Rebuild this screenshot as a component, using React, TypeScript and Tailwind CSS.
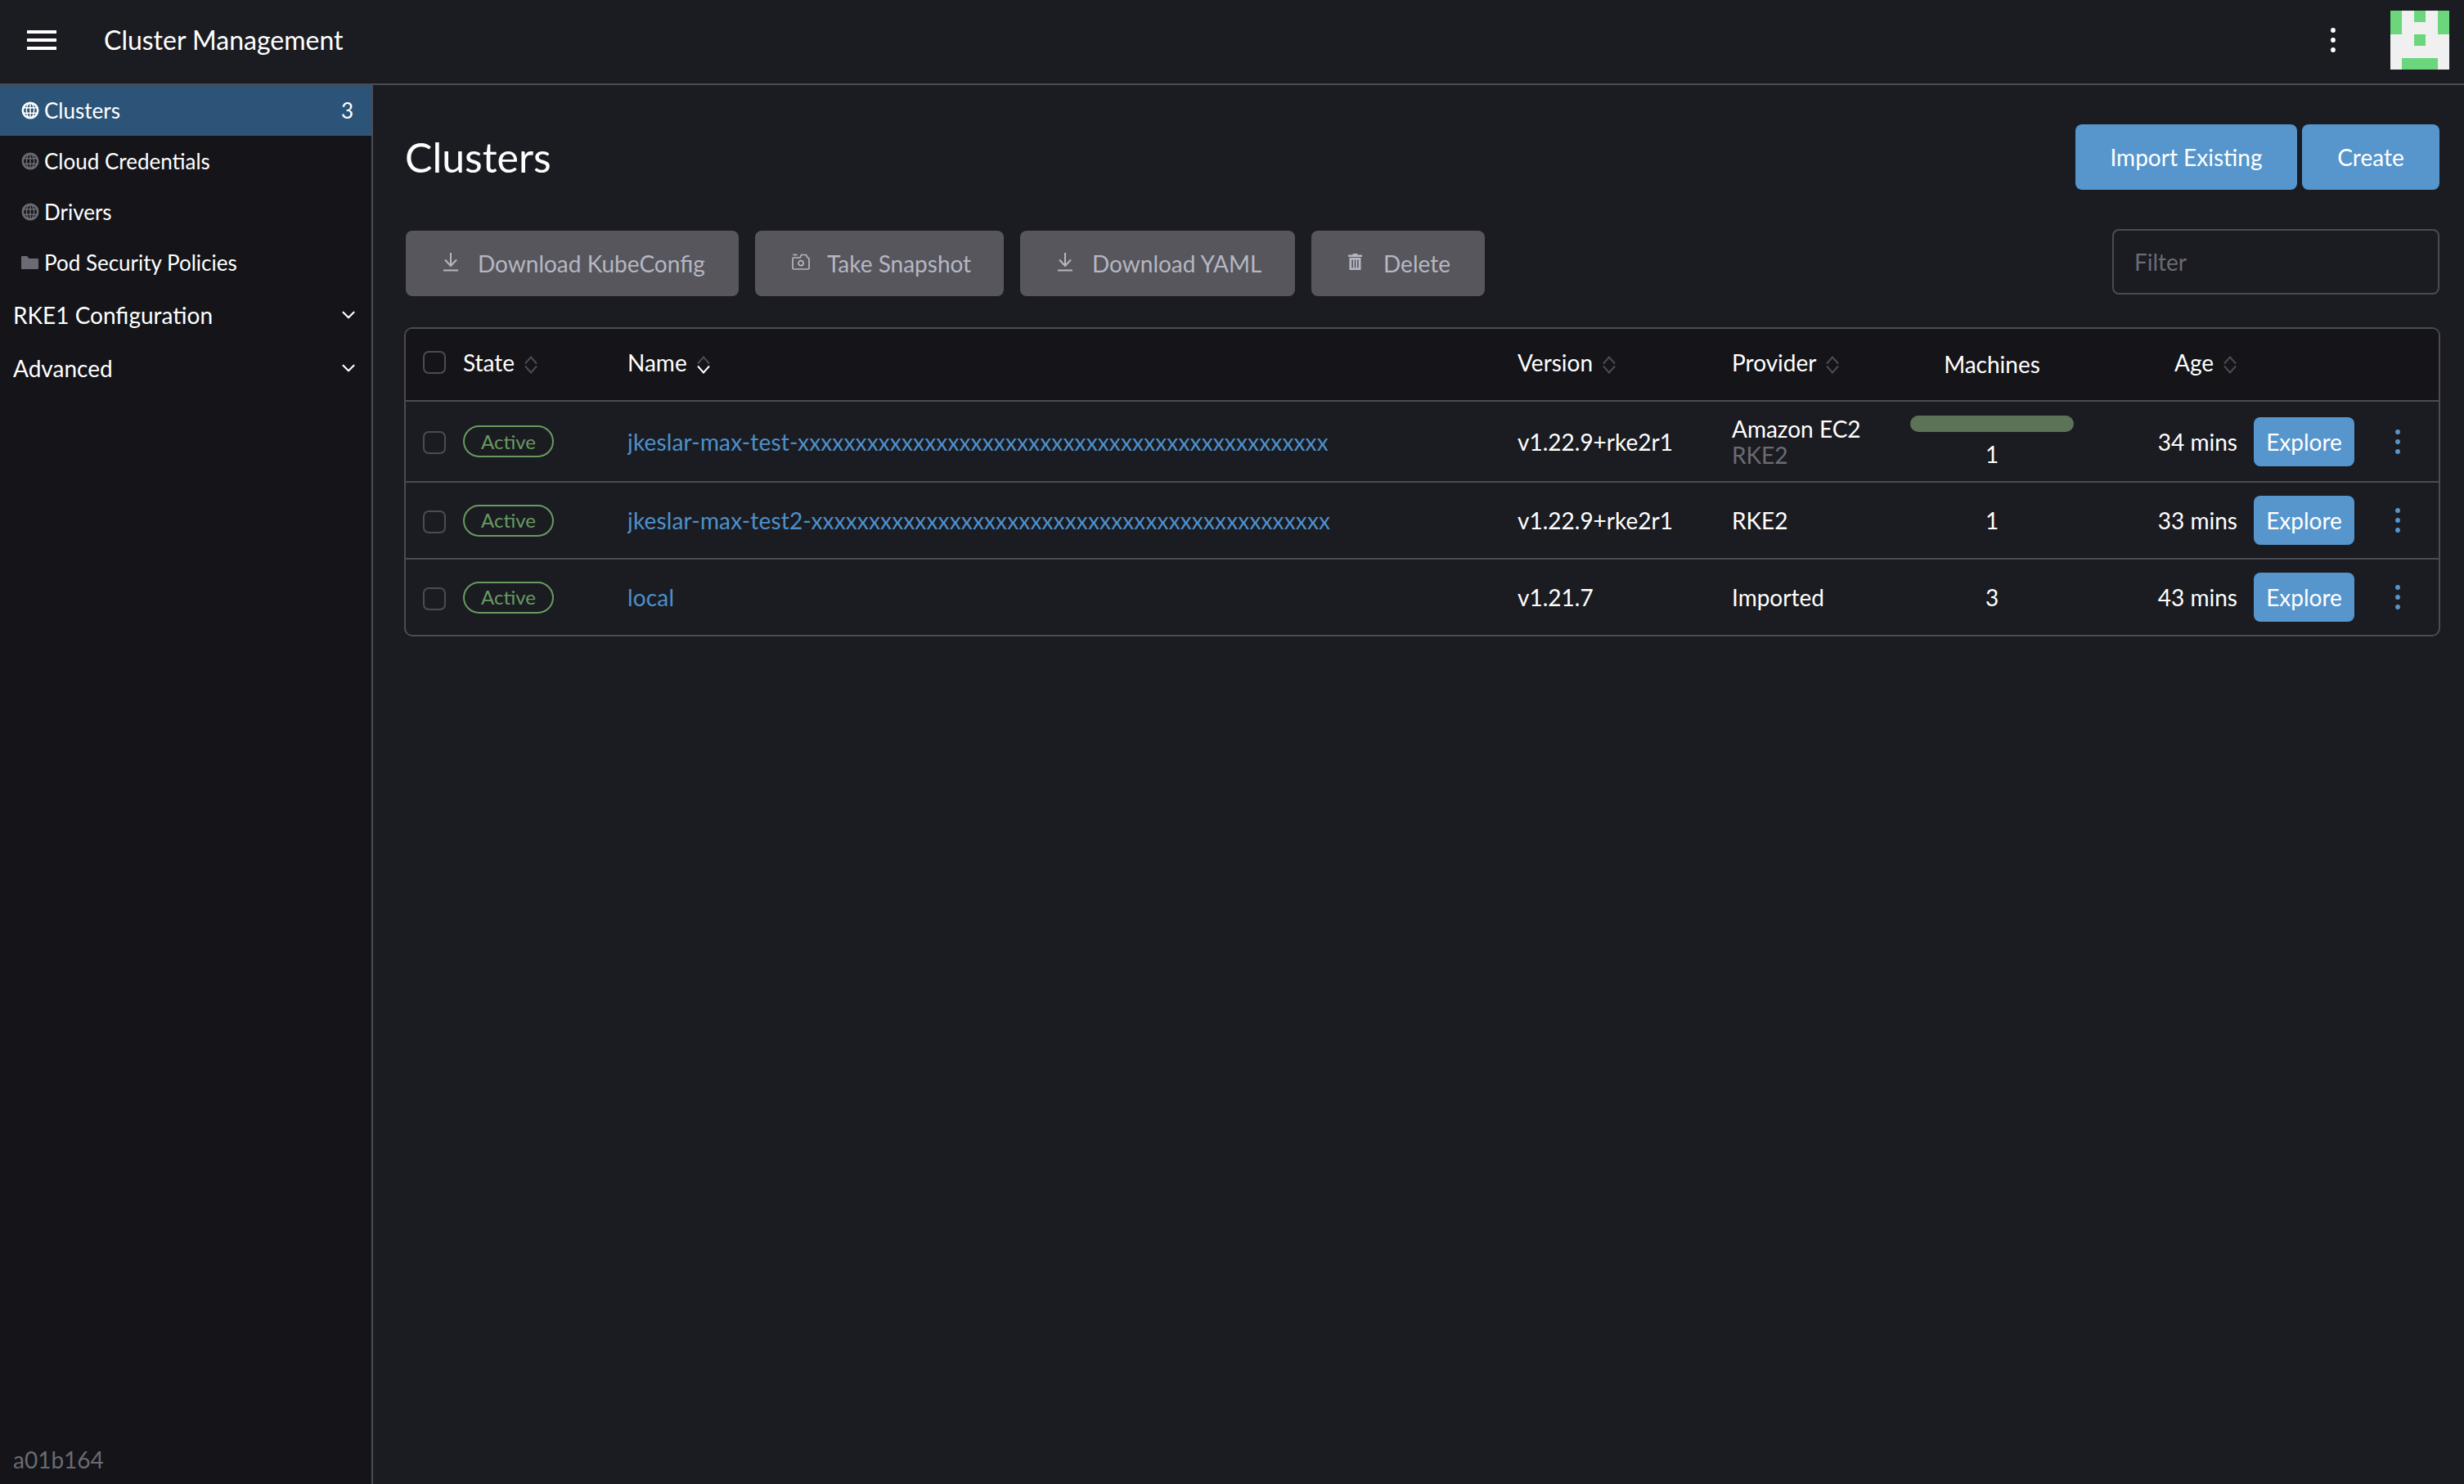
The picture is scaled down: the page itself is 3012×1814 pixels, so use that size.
import React from 'react';
import { ChevronDown } from 'lucide-react';

const rowGrid =
  'grid grid-cols-[70px_201px_1088px_262px_218px_200px_220px_123px_1fr] items-center';

const clusters = [
  {
    name: 'jkeslar-max-test-' + 'x'.repeat(46),
    version: 'v1.22.9+rke2r1',
    provider: 'Amazon EC2',
    sub: 'RKE2',
    machines: '1',
    age: '34 mins',
    height: 'h-[99px]',
    bar: true,
  },
  {
    name: 'jkeslar-max-test2-' + 'x'.repeat(45),
    version: 'v1.22.9+rke2r1',
    provider: 'RKE2',
    machines: '1',
    age: '33 mins',
    height: 'h-[94px]',
  },
  {
    name: 'local',
    version: 'v1.21.7',
    provider: 'Imported',
    machines: '3',
    age: '43 mins',
    height: 'h-[94px]',
  },
];

const Globe = ({ color, cell }: { color: string; cell: string }) => (
  <svg viewBox="0 0 22 22" className="w-[22px] h-[22px] shrink-0" fill="none" stroke={color}>
    <circle cx="11" cy="11" r="9.200" fill={cell} strokeWidth="2.600" />
    <g strokeWidth="1.500">
      <ellipse cx="11" cy="11" rx="4.600" ry="9" />
      <path d="M11 2v18M3 7.800h16M3 14.200h16" />
    </g>
  </svg>
);

const Folder = () => (
  <svg viewBox="0 0 21 16" className="w-[21px] h-[16px] mr-[1px] shrink-0" fill="#6b6b73">
    <path d="M0 1A1 1 0 0 1 1 0h6l2.500 3H20a1 1 0 0 1 1 1v11a1 1 0 0 1-1 1H1a1 1 0 0 1-1-1z" />
  </svg>
);

const Dots = ({ color }: { color: string }) => (
  <svg viewBox="0 0 6 30" className="w-[6px] h-[30px]" fill={color}>
    <circle cx="3" cy="3" r="2.900" />
    <circle cx="3" cy="15" r="2.900" />
    <circle cx="3" cy="27" r="2.900" />
  </svg>
);

const Sort = ({ down }: { down?: boolean }) => (
  <svg viewBox="0 0 16 22" className="w-[16px] h-[22px] ml-[12px]" fill="none" strokeWidth="2">
    <path d="M1 9.500l7-8 7 8" stroke="#4b4c53" />
    <path d="M1 12.500l7 8 7-8" stroke={down ? '#ffffff' : '#4b4c53'} />
  </svg>
);

const DownloadIcon = () => (
  <svg viewBox="0 0 20 23" className="w-[20px] h-[23px]" fill="none" stroke="#b6b6c2" strokeWidth="2">
    <path d="M10 0v16.500M3 8.500l7 7.500 7-7.500M1 21.500h18" />
  </svg>
);

const Snapshot = () => (
  <svg viewBox="0 0 22 20" className="w-[22px] h-[20px]" fill="none" stroke="#b6b6c2" strokeWidth="1.700">
    <path d="M2.500 5H10l1.500-3.500h6L19 5h.5A1.500 1.500 0 0 1 21 6.500v11a1.500 1.500 0 0 1-1.500 1.500h-17A1.500 1.500 0 0 1 1 17.500v-11A1.500 1.500 0 0 1 2.500 5z" />
    <circle cx="11" cy="11.700" r="3" />
    <path d="M1.500 1.500h5" />
  </svg>
);

const Trash = () => (
  <svg viewBox="0 0 17 20" className="w-[17px] h-[20px]" fill="#b6b6c2">
    <path d="M6 0h5l.7 1.500H17V4H0V1.500h5.300z" />
    <path
      fillRule="evenodd"
      d="M1.500 5h14v15h-14zM4.300 7.500v10h1.600v-10zM7.700 7.500v10h1.600v-10zM11.100 7.500v10h1.600v-10z"
    />
  </svg>
);

const Avatar = () => (
  <svg viewBox="0 0 5 5" className="w-[72px] h-[72px]" shapeRendering="crispEdges">
    <rect width="5" height="5" fill="#f0f0f0" />
    <g fill="#6bd67c">
      <rect x="0" y="0" width="1" height="2" />
      <rect x="4" y="0" width="1" height="2" />
      <rect x="2" y="0" width="1" height="1" />
      <rect x="2" y="2" width="1" height="1" />
      <rect x="1" y="4" width="3" height="1" />
    </g>
  </svg>
);

const Checkbox = ({ header }: { header?: boolean }) => (
  <div
    className={`ml-[21px] w-[28px] h-[28px] rounded-[7px] border-2 border-[#4b4c53] ${
      header ? 'mb-[5px]' : 'mt-[3px]'
    }`}
  />
);

const ActionButton = ({
  icon,
  label,
  width,
}: {
  icon: React.ReactNode;
  label: string;
  width: string;
}) => (
  <button className={`${width} h-[80px] pl-[45px] rounded-[8px] bg-[#56565c] text-[#b6b6c2] text-[28px] flex items-center`}>
    <span className="w-[43px] flex mb-[4px]">{icon}</span>
    <span>{label}</span>
  </button>
);

const NavItem = ({
  icon,
  label,
  count,
  active,
}: {
  icon: React.ReactNode;
  label: string;
  count?: string;
  active?: boolean;
}) => (
  <div
    className={`h-[62px] pl-[26px] pr-[22px] flex items-center gap-[6px] text-[26px] text-white ${
      active ? 'bg-[#2c5378]' : ''
    }`}
  >
    {icon}
    <span className="flex-1">{label}</span>
    {count && <span>{count}</span>}
  </div>
);

const Group = ({ label }: { label: string }) => (
  <div className="h-[65px] pl-[16px] pr-[15px] flex items-center justify-between text-[28px] text-white">
    {label}
    <ChevronDown className="w-[26px] h-[26px]" strokeWidth={2} />
  </div>
);

const HeaderCell = ({ label, down }: { label: string; down?: boolean }) => (
  <div className="flex items-center">
    <span className="mb-[5px]">{label}</span>
    <Sort down={down} />
  </div>
);

export default function App() {
  return (
    <div className="h-screen flex flex-col bg-[#1b1c21] text-white font-['Lato',sans-serif] overflow-hidden">
      <header className="h-[104px] shrink-0 border-b-2 border-[#4b4c53] flex items-center pl-[33px] pr-[18px] pb-[5px]">
        <div className="w-[36px] flex flex-col gap-[6px]">
          <div className="h-[4px] bg-white" />
          <div className="h-[4px] bg-white" />
          <div className="h-[4px] bg-white" />
        </div>
        <h1 className="ml-[58px] flex-1 text-[32px]">Cluster Management</h1>
        <Dots color="#ffffff" />
        <div className="ml-[67px]">
          <Avatar />
        </div>
      </header>

      <div className="flex-1 flex min-h-0">
        <aside className="w-[456px] shrink-0 bg-[#141419] border-r-2 border-[#4b4c53] flex flex-col">
          <NavItem icon={<Globe color="#ffffff" cell="#2c5378" />} label="Clusters" count="3" active />
          <NavItem icon={<Globe color="#6b6b73" cell="#141419" />} label="Cloud Credentials" />
          <NavItem icon={<Globe color="#6b6b73" cell="#141419" />} label="Drivers" />
          <NavItem icon={<Folder />} label="Pod Security Policies" />
          <Group label="RKE1 Configuration" />
          <Group label="Advanced" />
          <div className="mt-auto pl-[16px] pb-[9px] text-[28px] text-[#6b6b73]">a01b164</div>
        </aside>

        <main className="flex-1 pl-[38px] pr-[29px] pt-[48px]">
          <div className="flex items-center justify-between h-[80px]">
            <h2 className="ml-[1px] text-[50px]">Clusters</h2>
            <div className="mr-[1px] flex gap-[6px] text-[28px]">
              <button className="h-[80px] w-[271px] rounded-[8px] bg-[#5696cd]">Import Existing</button>
              <button className="h-[80px] w-[168px] rounded-[8px] bg-[#5696cd]">Create</button>
            </div>
          </div>

          <div className="mt-[50px] ml-[2px] flex items-center justify-between">
            <div className="flex gap-[20px]">
              <ActionButton width="w-[407px]" icon={<DownloadIcon />} label="Download KubeConfig" />
              <ActionButton width="w-[304px]" icon={<Snapshot />} label="Take Snapshot" />
              <ActionButton width="w-[336px]" icon={<DownloadIcon />} label="Download YAML" />
              <ActionButton width="w-[212px]" icon={<Trash />} label="Delete" />
            </div>
            <div className="w-[400px] h-[80px] mr-[1px] -mt-[4px] rounded-[8px] border-2 border-[#4b4c53] pl-[25px] flex items-center text-[28px] text-[#6b6b73]">
              Filter
            </div>
          </div>

          <div className="mt-[38px] rounded-[10px] border-2 border-[#4b4c53] overflow-hidden text-[28px]">
            <div className={`${rowGrid} h-[87px] bg-[#141419]`}>
              <Checkbox header />
              <HeaderCell label="State" />
              <HeaderCell label="Name" down />
              <HeaderCell label="Version" />
              <HeaderCell label="Provider" />
              <div className="text-center mb-[1px]">Machines</div>
              <div className="pl-[123px]">
                <HeaderCell label="Age" />
              </div>
            </div>
            {clusters.map((c) => (
              <div key={c.name} className={`${rowGrid} ${c.height} border-t-2 border-[#4b4c53]`}>
                <Checkbox />
                <div className="flex">
                  <span className="flex items-center justify-center w-[111px] h-[39px] rounded-full border-2 border-[#689a62] text-[#689a62] text-[24px]">
                    Active
                  </span>
                </div>
                <a className="text-[#4d90cc] truncate tracking-[0.16px]">{c.name}</a>
                <div>{c.version}</div>
                <div className="leading-[32px]">
                  <div>{c.provider}</div>
                  {c.sub && <div className="text-[#6b6b73]">{c.sub}</div>}
                </div>
                <div className="text-center leading-[32px]">
                  {c.bar && <div className="h-[20px] mb-[11px] rounded-[10px] bg-[#5d7358]" />}
                  <div>{c.machines}</div>
                </div>
                <div className="text-right pr-[20px]">{c.age}</div>
                <button className="h-[60px] rounded-[8px] bg-[#5696cd]">Explore</button>
                <div className="flex justify-center pl-[2px]">
                  <Dots color="#5696cd" />
                </div>
              </div>
            ))}
          </div>
        </main>
      </div>
    </div>
  );
}
